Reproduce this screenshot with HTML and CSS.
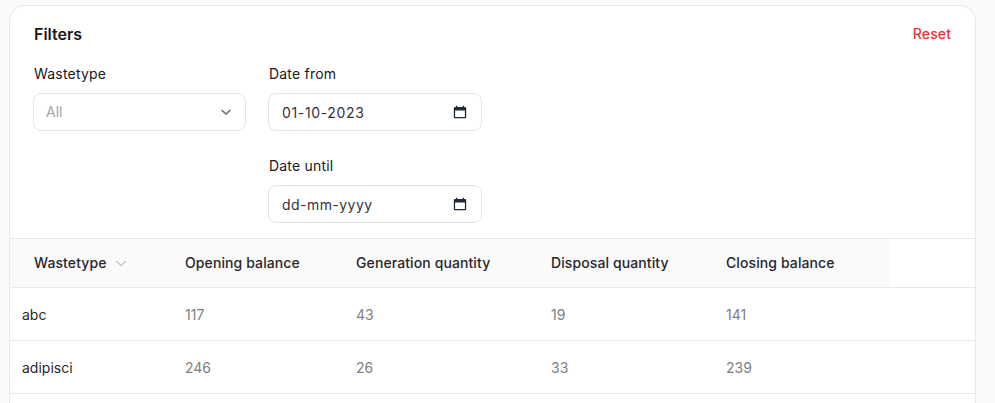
FILE: index.html
```html
<!DOCTYPE html>
<html lang="en">
<head>
<meta charset="utf-8">
<title>Filters</title>
<link rel="stylesheet" href="styles.css">
</head>
<body>
<main class="card">
  <section class="filters">
    <header class="filters-head">
      <h2 class="filters-title">Filters</h2>
      <a class="reset" href="#">Reset</a>
    </header>
    <div class="filters-grid">
      <div class="field">
        <label class="label">Wastetype</label>
        <div class="control">
          <span class="placeholder">All</span>
          <svg class="chevron" width="16" height="16" viewBox="0 0 16 16" fill="none"><path d="M3.6 6l4.4 4.2L12.4 6" stroke="#6b7280" stroke-width="1.6"/></svg>
        </div>
      </div>
      <div class="field">
        <label class="label">Date from</label>
        <div class="control date">
          <span class="date-text date-value">01-10-2023</span>
          <svg class="cal" width="14" height="14" viewBox="0 0 14 14"><path fill="#1f2937" d="M3 0.8h1.3V2h5.4V0.8H11V2h0.9c.7 0 1.3.6 1.3 1.3v8.6c0 .7-.6 1.3-1.3 1.3H2.1c-.7 0-1.3-.6-1.3-1.3V3.3C.8 2.6 1.4 2 2.1 2H3zM2.1 5.4v6.5h9.8V5.4z"/></svg>
        </div>
      </div>
      <div class="field field-until">
        <label class="label">Date until</label>
        <div class="control date">
          <span class="date-text">dd-mm-yyyy</span>
          <svg class="cal" width="14" height="14" viewBox="0 0 14 14"><path fill="#1f2937" d="M3 0.8h1.3V2h5.4V0.8H11V2h0.9c.7 0 1.3.6 1.3 1.3v8.6c0 .7-.6 1.3-1.3 1.3H2.1c-.7 0-1.3-.6-1.3-1.3V3.3C.8 2.6 1.4 2 2.1 2H3zM2.1 5.4v6.5h9.8V5.4z"/></svg>
        </div>
      </div>
    </div>
  </section>
  <table class="table">
    <colgroup>
      <col class="c1"><col class="c2"><col class="c3"><col class="c4"><col class="c5"><col>
    </colgroup>
    <thead>
      <tr>
        <th class="first"><span class="sort">Wastetype <svg class="sort-icon" width="14" height="14" viewBox="0 0 14 14" fill="none"><path d="M2 5l5 4.500L12 5" stroke="#9ca3af" stroke-width="1"/></svg></span></th>
        <th>Opening balance</th>
        <th>Generation quantity</th>
        <th>Disposal quantity</th>
        <th>Closing balance</th>
        <th class="blank"></th>
      </tr>
    </thead>
    <tbody>
      <tr><td class="name">abc</td><td>117</td><td>43</td><td>19</td><td>141</td><td></td></tr>
      <tr><td class="name">adipisci</td><td>246</td><td>26</td><td>33</td><td>239</td><td></td></tr>
    </tbody>
  </table>
</main>
</body>
</html>
```
FILE: styles.css
```css
* { box-sizing: border-box; }
html, body { margin: 0; height: 100%; overflow: hidden; }
body {
  background: #fafafa;
  font-family: Inter, "Liberation Sans", sans-serif;
  color: #18181b;
  padding: 5px 19px 0 9px;
}
.card {
  background: #fff;
  border: 1px solid #e9e9eb;
  border-bottom: 0;
  border-radius: 16px 16px 0 0;
  height: 100%;
}
.filters { padding: 16px 24px 15px 24px; }
.filters-head { display: flex; justify-content: space-between; align-items: center; height: 24px; }
.filters-title { margin: 0; font-size: 16px; font-weight: 600; line-height: 24px; }
.reset { color: #e5343a; font-size: 14px; font-weight: 500; line-height: 24px; text-decoration: none; letter-spacing: .1px; }
.filters-grid {
  display: grid;
  grid-template-columns: 213px 214px;
  column-gap: 22px;
  row-gap: 25px;
  margin-top: 18px;
  margin-left: -1px;
}
.field-until { grid-column: 2; }
.label { display: block; font-size: 14px; font-weight: 400; line-height: 20px; margin-bottom: 9px; margin-left: 1px; color: #18181b; letter-spacing: .2px; }
.control {
  height: 38px;
  border: 1px solid #e4e4e7;
  border-radius: 8px;
  display: flex;
  align-items: center;
  justify-content: space-between;
  padding: 0 12px;
  background: #fff;
}
.control.date { padding: 0 14px 0 13px; }
.placeholder { font-size: 14px; line-height: 20px; padding-bottom: 1px; color: #a1a1aa; }
.date-text { font-size: 14px; color: #333338; letter-spacing: .45px; }
.date-value { letter-spacing: .65px; }
.chevron { display: block; margin-right: -1px; }
.cal { display: block; }
.table { width: 100%; border-collapse: collapse; table-layout: fixed; }
.c1 { width: 163px; }
.c2 { width: 171px; }
.c3 { width: 195px; }
.c4 { width: 175px; }
.c5 { width: 176px; }
th, td { padding: 0 12px; text-align: left; border-top: 1px solid #e9e9eb; border-bottom: 1px solid #e9e9eb; }
th {
  height: 49px;
  padding-bottom: 1px;
  background: #fafafa;
  font-size: 14px;
  font-weight: 500;
  color: #27272a;
  white-space: nowrap;
  letter-spacing: .1px;
}
th.first { padding-left: 24px; }
th.blank { background: #fff; }
td { height: 53px; font-size: 14px; color: #808084; }
td.name { color: #27272a; }
.sort { display: inline-flex; align-items: center; gap: 7px; }
.sort-icon { display: block; }
```
